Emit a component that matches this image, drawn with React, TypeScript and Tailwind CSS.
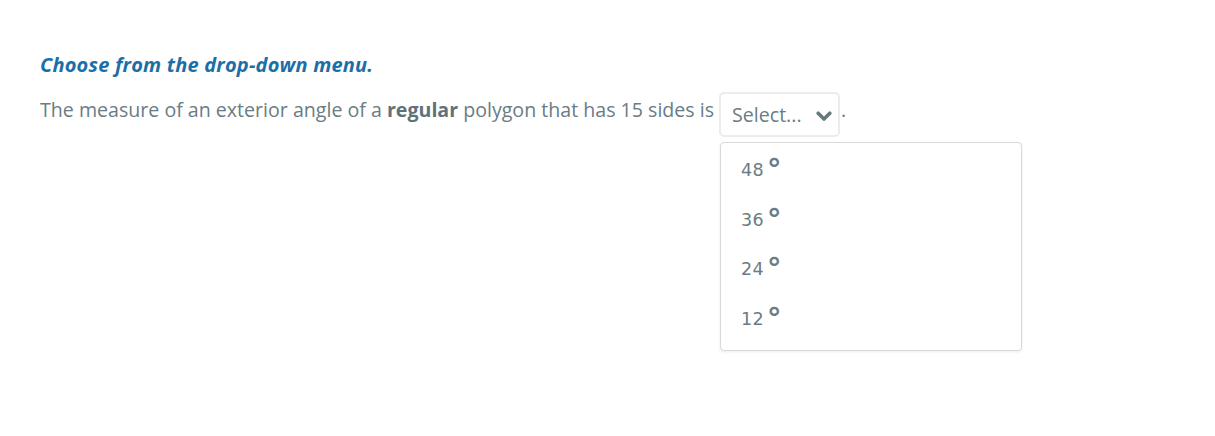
import React from "react";

export default function App() {
  const options = ["48", "36", "24", "12"];
  return (
    <div className="w-[1215px] h-[436px] bg-white" style={{ fontFamily: '"Open Sans", "Noto Sans", sans-serif' }}>
      <div className="pl-[40px] pt-[52px]">
        <h2 className="text-[20px] font-bold italic text-[#1b6fa8] leading-[26px] tracking-[0.2px]">Choose from the drop-down menu.</h2>
        <div className="mt-[18px] flex items-start text-[19.6px] text-[#6a7c84] leading-[28px]">
          <span>
            The measure of an exterior angle of a <b className="text-[#5f727a]">regular</b> polygon that has 15 sides is
          </span>
          <div className="relative ml-[5px] -mt-[4px]">
            <div className="w-[121px] h-[45px] border-2 border-[#ececec] rounded-[5px] flex items-center pl-[11px] pr-[6px] justify-between">
              <span className="text-[19.6px] text-[#6a7c84] mt-[1px]">Select...</span>
              <svg width="16" height="11" viewBox="0 0 16 11" className="mt-[4px]">
                <path d="M2.2 2.2 L8 8 L13.8 2.2" stroke="#66797f" strokeWidth="3.6" fill="none" strokeLinecap="round" strokeLinejoin="round" />
              </svg>
            </div>
            <div className="absolute left-[1px] top-[50px] w-[302px] h-[209px] bg-white border border-[#d9d9d9] rounded-[4px] shadow-[0_1px_3px_rgba(0,0,0,0.08)] pt-[15px]">
              {options.map((o) => (
                <div key={o} className="h-[49.5px] pl-[20px] flex items-start text-[17.5px] text-[#6a7c84]" style={{ fontFamily: '"DejaVu Sans", sans-serif' }}>
                  <span className="tracking-[0.3px] leading-[24px]">{o}</span>
                  <span className="ml-[3px] text-[29px] font-bold leading-[20px] mt-[1px]">°</span>
                </div>
              ))}
            </div>
          </div>
          <span className="ml-[1px] text-[#6a7c84]">.</span>
        </div>
      </div>
    </div>
  );
}
